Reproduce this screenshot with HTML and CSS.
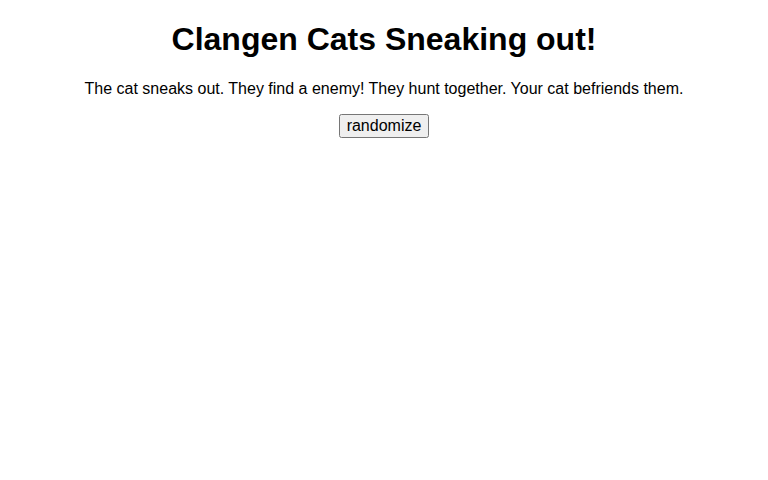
FILE: index.html
```html
<!DOCTYPE html>
<html lang="en">
<head>
    <meta charset="utf-8" />
    <meta name="viewport" content="width=device-width, initial-scale=1.0" />
    <title>Clangen Cats Sneaking out!</title>
    <link rel="stylesheet" href="styles.css">
</head>
<body>
    <h1>Clangen Cats Sneaking out!</h1>
    <p id="story">The cat sneaks out. They find a enemy! They hunt together. Your cat befriends them.</p>
    <button id="randomize">randomize</button>
</body>
</html>
```

FILE: styles.css
```css
body {
    margin: 0;
    font-family: "Liberation Sans", Arial, sans-serif;
    text-align: center;
    background-color: #fff;
}
h1 {
    font-size: 32px;
}
#randomize {
    font-family: "Liberation Sans", Arial, sans-serif;
    font-size: 16px;
}
```
